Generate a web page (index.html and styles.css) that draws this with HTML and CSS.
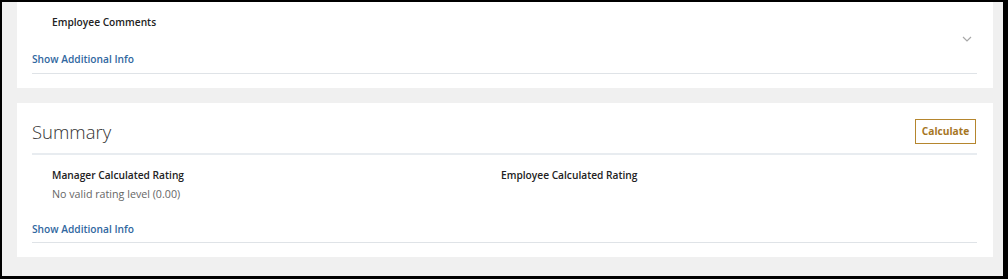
FILE: index.html
```html
<!DOCTYPE html>
<html>
<head>
<meta charset="utf-8">
<link rel="stylesheet" href="styles.css">
</head>
<body>
<div class="frame">
  <section class="card card-top">
    <div class="comments-row">
      <div class="field-label">Employee Comments</div>
      <svg class="chevron" width="10" height="6" viewBox="0 0 10 6"><path d="M1 1 L5 5 L9 1" fill="none" stroke="#a8a8a8" stroke-width="1.2"/></svg>
    </div>
    <a class="more-link">Show Additional Info</a>
    <div class="rule"></div>
  </section>
  <section class="card card-summary">
    <div class="summary-head">
      <h2 class="summary-title">Summary</h2>
      <button class="calc-btn">Calculate</button>
    </div>
    <div class="rule rule-head"></div>
    <div class="ratings">
      <div class="rating">
        <div class="field-label">Manager Calculated Rating</div>
        <div class="field-value">No valid rating level (0.00)</div>
      </div>
      <div class="rating">
        <div class="field-label">Employee Calculated Rating</div>
      </div>
    </div>
    <a class="more-link">Show Additional Info</a>
    <div class="rule rule-bottom"></div>
  </section>
</div>
</body>
</html>
```

FILE: styles.css
```css
html, body {
  margin: 0;
  padding: 0;
}
body {
  font-family: "Open Sans", "Noto Sans", Arial, sans-serif;
  font-size: 10.2px;
  color: #222;
}
.frame {
  box-sizing: border-box;
  width: 1008px;
  height: 279px;
  border-style: solid;
  border-color: #000;
  border-width: 2px 5px 3px 2px;
  background: #f0f0f0;
  padding: 0 10px 0 15px;
  display: flex;
  flex-direction: column;
  gap: 15px;
}
.card {
  background: #fff;
  padding: 0 16px 0 15px;
  display: flex;
  flex-direction: column;
}
.card-top {
  height: 86px;
  box-sizing: border-box;
  padding-top: 12px;
}
.comments-row {
  position: relative;
  height: 37px;
}
.field-label {
  font-weight: 600;
  color: #222;
  line-height: 16px;
  padding-left: 20px;
}
.chevron {
  position: absolute;
  right: 5px;
  top: 22px;
}
.more-link {
  color: #2f67a0;
  font-weight: 600;
  line-height: 16px;
  display: block;
}
.rule {
  height: 1px;
  background: #dfe3e7;
  margin-top: 6px;
}
.rule-bottom {
  margin-top: 5px;
}
.card-summary {
  height: 154px;
  box-sizing: border-box;
  padding-top: 15px;
}
.summary-head {
  display: flex;
  justify-content: space-between;
  align-items: center;
  height: 26px;
}
.summary-title {
  margin: 0;
  font-weight: 300;
  font-size: 18.5px;
  color: #333;
  line-height: 26px;
  position: relative;
  top: 1px;
}
.calc-btn {
  font-family: inherit;
  font-size: 10.2px;
  font-weight: 700;
  color: #a6761f;
  background: #fff;
  border: 1px solid #b5862e;
  height: 25px;
  width: 61px;
  padding: 0;
  margin-right: 1px;
}
.rule-head {
  height: 2px;
  background: #e8ecf0;
  margin-top: 9px;
}
.ratings {
  display: grid;
  grid-template-columns: 449px 1fr;
  margin-top: 12px;
  height: 54px;
}
.rating .field-label {
  line-height: 17px;
}
.field-value {
  color: #666;
  font-size: 10.7px;
  padding-left: 20px;
  line-height: 17px;
  margin-top: 2px;
}
```
